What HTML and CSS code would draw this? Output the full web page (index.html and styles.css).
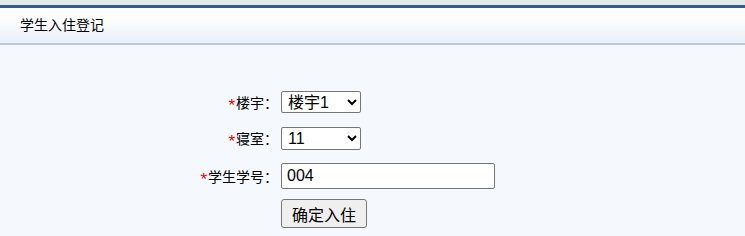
FILE: index.html
```html
<!DOCTYPE html>
<html lang="zh-CN">
<head>
    <meta charset="UTF-8">
    <title>学生入住登记</title>
    <link rel="stylesheet" href="styles.css">
</head>
<body>
    <div class="topbar"></div>

    <div class="title-bar">学生入住登记</div>

    <form class="checkin-form">
        <div class="row row-select">
            <label class="field-label"><span class="req">*</span>楼宇：</label>
            <select class="field-select">
                <option>楼宇1</option>
                <option>楼宇2</option>
            </select>
        </div>
        <div class="row row-select2">
            <label class="field-label"><span class="req">*</span>寝室：</label>
            <select class="field-select">
                <option>11</option>
                <option>12</option>
            </select>
        </div>
        <div class="row row-input">
            <label class="field-label"><span class="req">*</span>学生学号：</label>
            <input type="text" class="field-input" value="004">
        </div>
        <div class="row">
            <span class="field-label"></span>
            <button type="button" class="btn">确定入住</button>
        </div>
    </form>
</body>
</html>
```

FILE: styles.css
```css
body {
    margin: 0;
    padding: 0;
    background: #f5f9fd;
    font-family: "Liberation Sans", "Noto Sans CJK SC", sans-serif;
    color: #000;
}

.topbar {
    height: 5px;
    background: #e6e9ec;
    border-bottom: 3px solid #335c95;
}

.title-bar {
    height: 35px;
    line-height: 35px;
    padding-left: 20px;
    font-size: 14px;
    background: linear-gradient(to bottom, #ffffff 0%, #fbfcfe 40%, #e8eff8 100%);
    border-bottom: 2px solid #b7ccda;
}

.checkin-form {
    padding-top: 46px;
}

.row {
    display: flex;
    align-items: center;
    margin-bottom: 14px;
}

.row-select2 {
    margin-bottom: 13px;
}

.row-input {
    margin-bottom: 10px;
}

.field-label {
    width: 278px;
    margin-right: 3px;
    text-align: right;
    font-size: 14px;
}

.req {
    color: #e00;
    font-size: 17px;
    margin-right: 1px;
    position: relative;
    top: 3px;
}

.field-select {
    width: 80px;
    height: 22px;
    font-size: 16px;
    font-family: "Liberation Sans", "Noto Sans CJK SC", sans-serif;
    padding: 0 0 0 2px;
    background: #fff;
    border: 1px solid #767676;
    border-radius: 2px;
    color: #000;
}

.row-select2 .field-select {
    height: 23px;
}

.field-input {
    box-sizing: border-box;
    width: 214px;
    height: 26px;
    font-size: 16px;
    font-family: "Liberation Sans", sans-serif;
    padding: 0 5px;
    border: 1px solid #767676;
    border-radius: 2px;
    background: #fff;
}

.btn {
    box-sizing: border-box;
    width: 86px;
    height: 29px;
    font-size: 16px;
    font-family: "Liberation Sans", "Noto Sans CJK SC", sans-serif;
    padding: 0;
    background: #efefef;
    border: 1px solid #767676;
    border-radius: 3px;
    color: #000;
}
```
